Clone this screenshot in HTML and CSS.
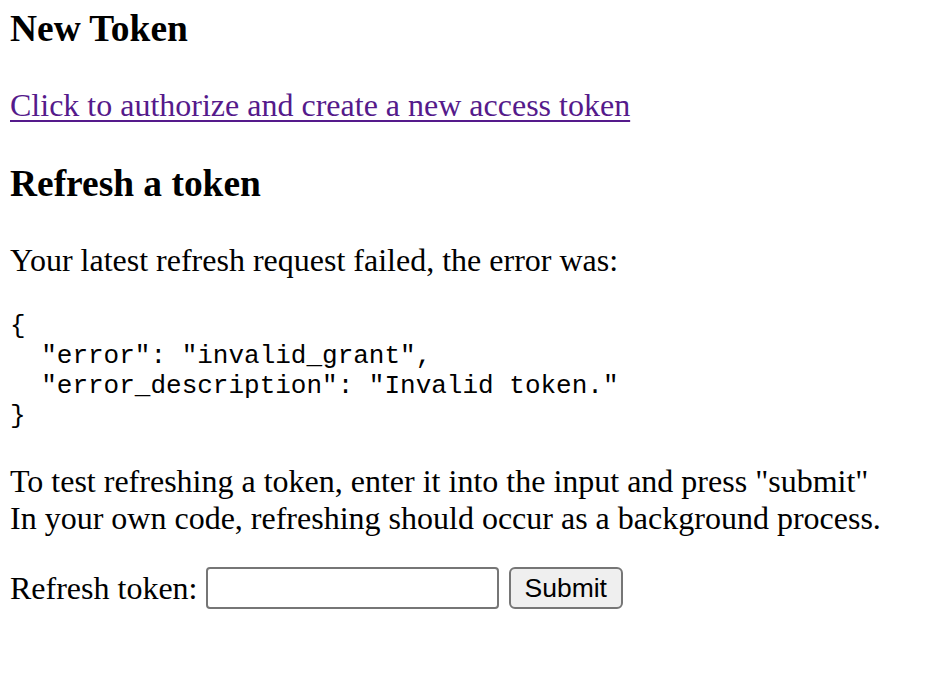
FILE: index.html
```html
<!DOCTYPE html>
<html>
<head>
<meta charset="utf-8">
<link rel="stylesheet" href="styles.css">
</head>
<body>
<h3 class="title first">New Token</h3>
<p class="para"><a class="link" href="#">Click to authorize and create a new access token</a></p>
<h3 class="title">Refresh a token</h3>
<p class="para">Your latest refresh request failed, the error was:</p>
<pre class="code">{
  "error": "invalid_grant",
  "error_description": "Invalid token."
}</pre>
<p class="para">To test refreshing a token, enter it into the input and press "submit"<br>In your own code, refreshing should occur as a background process.</p>
<form class="form">
<label class="label" for="rt">Refresh token:</label>
<input class="input" id="rt" type="text">
<button class="button" type="button">Submit</button>
</form>
</body>
</html>
```

FILE: styles.css
```css
html, body {
  background: #ffffff;
}
body {
  margin: 0;
  padding: 7px 10px 0 10px;
  font-family: "Liberation Serif", "Times New Roman", serif;
  font-size: 32px;
  color: #000000;
}
.title {
  font-size: 37.44px;
  font-weight: bold;
  margin: 37.44px 0;
  line-height: 43px;
}
.title.first {
  margin-top: 0;
}
.para {
  margin: 32px 0;
  line-height: 37px;
}
.link {
  color: #551a8b;
  text-decoration: underline;
  text-decoration-thickness: 2px;
  text-underline-offset: 4px;
}
.code {
  font-family: "Liberation Mono", "Courier New", monospace;
  font-size: 26px;
  line-height: 30px;
  margin: 32px 0;
}
.form {
  display: flex;
  align-items: center;
  margin: -2px 0 0 0;
}
.label {
  font-size: 32px;
  line-height: 37px;
  margin-right: 8px;
}
.input {
  box-sizing: border-box;
  width: 293px;
  height: 42px;
  margin: 0;
  border: 2px solid #767676;
  border-radius: 4px;
  background: #ffffff;
  padding: 2px 4px;
  font-size: 26px;
}
.button {
  box-sizing: border-box;
  height: 42px;
  margin: 0 0 0 10px;
  padding: 0 14px;
  border: 2px solid #767676;
  border-radius: 6px;
  background: #efefef;
  color: #000000;
  font-family: "Liberation Sans", Arial, sans-serif;
  font-size: 26.5px;
  line-height: 1;
}
```
